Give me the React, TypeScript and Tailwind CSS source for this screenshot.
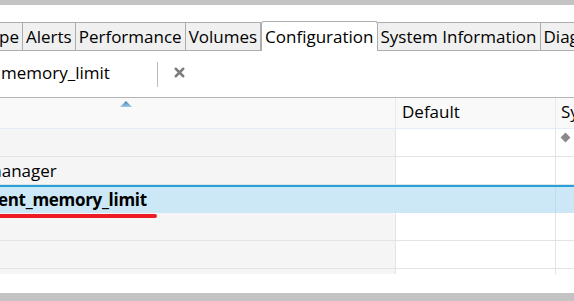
import { X } from 'lucide-react'

const tabs = ['Alerts', 'Performance', 'Volumes', 'Configuration', 'System Information', 'Diagnostics']

const font = { fontFamily: '"Segoe UI", "Open Sans", "Noto Sans", sans-serif' }

function Tab({ label, active }: { label: string; active?: boolean }) {
  return (
    <div
      className={
        active
          ? 'flex h-[30px] shrink-0 items-center rounded-t-[3px] border border-b-0 border-[#adadad] bg-white px-[3px]'
          : 'flex h-[29px] shrink-0 items-center border border-l-0 border-[#adadad] bg-[#f0f0f0] px-[3px]'
      }
    >
      {label}
    </div>
  )
}

export default function App() {
  const rows = [
    { text: '', sel: false },
    { text: 'manager', sel: false },
    { text: 'ent_memory_limit', sel: true },
    { text: '', sel: false },
    { text: '', sel: false },
  ]
  return (
    <div className="relative h-[301px] w-[574px] overflow-hidden bg-white text-[17px] text-black" style={font}>
      <div className="h-[5px] bg-[#c3c3c3]" />
      <div className="h-[16px]" />
      {/* tabs */}
      <div className="flex h-[30px] items-end leading-none">
        <div className="flex h-[29px] w-[23px] shrink-0 items-center justify-end border border-l-0 border-[#adadad] bg-[#f0f0f0] pr-[3px]">
          pe
        </div>
        {tabs.map((t) => (
          <Tab key={t} label={t} active={t === 'Configuration'} />
        ))}
      </div>
      {/* filter bar */}
      <div className="flex h-[47px] items-center border-b border-[#b4b4b4]">
        <div className="w-[157px] shrink-0 pl-[1px] pb-[2px]">memory_limit</div>
        <div className="h-[25px] w-px bg-[#b6bcc3]" />
        <X className="ml-[14px] mb-[3px] text-[#7d7d7d]" size={15} strokeWidth={4} />
      </div>
      {/* table */}
      <div className="flex h-[31px] border-b border-[#e6ecf5] bg-[#f9f9f9]">
        <div className="relative w-[396px] shrink-0 border-r border-[#e6ecf5]">
          <svg className="absolute left-[120px] top-[3px]" width="12" height="6" viewBox="0 0 12 6">
            <defs>
              <linearGradient id="g" x1="0" y1="0" x2="0" y2="1">
                <stop offset="0" stopColor="#3c7fb1" />
                <stop offset="1" stopColor="#9fcbe8" />
              </linearGradient>
            </defs>
            <path d="M6 0 L12 6 L0 6 Z" fill="url(#g)" />
          </svg>
        </div>
        <div className="flex w-[160px] shrink-0 items-end border-r border-[#e6ecf5] pb-[4px] pl-[6px]">Default</div>
        <div className="flex flex-1 items-end overflow-hidden whitespace-nowrap pb-[4px] pl-[5px]">System</div>
      </div>
      {rows.map((r, i) => (
        <div
          key={i}
          className={
            r.sel
              ? 'flex h-[28px] border-t-2 border-[#26a0da] bg-[#cce8f6] font-bold tracking-[-0.3px]'
              : 'flex h-[28px] border-b border-[#e3e3e3]'
          }
        >
          <div
            className={
              r.sel
                ? 'flex w-[396px] shrink-0 items-center overflow-hidden'
                : 'flex w-[396px] shrink-0 items-center overflow-hidden border-r border-[#e3e3e3] bg-[#f5f5f5]'
            }
          >
            <span className={r.text === 'manager' ? '-ml-[14px] whitespace-nowrap' : '-ml-[2px] whitespace-nowrap'}>
              {r.text}
            </span>
          </div>
          <div className={r.sel ? 'w-[160px] shrink-0 border-r border-[#bfdcec]' : 'w-[160px] shrink-0 border-r border-[#e3e3e3]'} />
          <div className="relative flex-1">
            {i === 0 && <div className="absolute left-[6px] top-[5px] h-[7px] w-[7px] rotate-45 bg-[#8a8a8a]" />}
          </div>
        </div>
      ))}
      <div className="flex h-[5px]">
        <div className="w-[396px] shrink-0 border-r border-[#e3e3e3] bg-[#f5f5f5]" />
        <div className="w-[160px] shrink-0 border-r border-[#e3e3e3]" />
      </div>
      <div className="absolute left-0 top-[214px] h-[4px] w-[157px] rounded-r-full bg-[#ed1c24]" />
      <div className="absolute bottom-0 left-0 h-[8px] w-full bg-[#c3c3c3]" />
    </div>
  )
}
